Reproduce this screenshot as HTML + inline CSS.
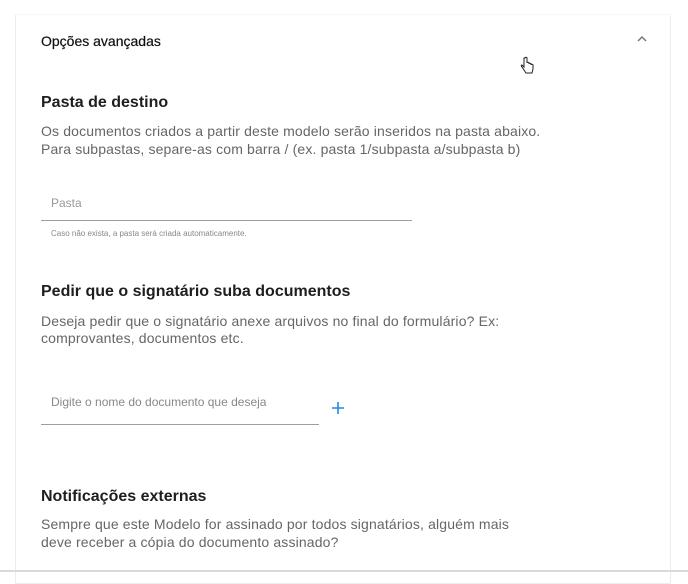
<!DOCTYPE html>
<html><head><meta charset="utf-8"><style>
*{margin:0;padding:0;box-sizing:border-box}
body{width:688px;height:572px;background:#fff;font-family:"Liberation Sans",sans-serif;position:relative;overflow:hidden}
.card{position:absolute;left:15px;top:14px;width:656px;height:570px;border:1px solid #ececec;border-top-color:#f6f6f6;border-radius:2px;background:#fff}
.t{position:absolute;white-space:nowrap}
.h0{left:41px;top:33px;font-size:14px;color:#111;font-weight:500;-webkit-text-stroke:0.2px #111}
.h{left:41px;font-size:16px;font-weight:bold;color:#1e1e1e}
.p{left:41px;font-size:14px;color:#666;line-height:18px;letter-spacing:0.15px}
.ph{font-size:12px;color:#999}
.line{position:absolute;height:1px;background:#9e9e9e}
</style></head><body>
<div class="card"></div>
<div class="t h0">Opções avançadas</div>
<svg style="position:absolute;left:636px;top:35px" width="12" height="8"><path d="M2 6 L6 2 L10 6" stroke="#777" stroke-width="1.5" fill="none"/></svg>
<svg style="position:absolute;left:519px;top:56px" width="16" height="20"><path d="M5 2v9l-2-2c-1 0-1 1 0 2l4 6h6l1-4v-4c0-1-2-1-2 0v-1c0-1-2-1-2 0v-1c0-1-2-1-2 0V2c0-1-2-1-2 0z" fill="#fff" stroke="#222" stroke-width="1"/></svg>
<div class="t h" style="top:94px">Pasta de destino</div>
<div class="t p" style="top:122px">Os documentos criados a partir deste modelo serão inseridos na pasta abaixo.<br>Para subpastas, separe-as com barra / (ex. pasta 1/subpasta a/subpasta b)</div>
<div class="t ph" style="left:51px;top:196px">Pasta</div>
<div class="line" style="left:41px;top:220px;width:371px"></div>
<div class="t" style="left:51px;top:229px;font-size:8px;color:#888">Caso não exista, a pasta será criada automaticamente.</div>
<div class="t h" style="top:283px">Pedir que o signatário suba documentos</div>
<div class="t p" style="top:313px;line-height:17px">Deseja pedir que o signatário anexe arquivos no final do formulário? Ex:<br>comprovantes, documentos etc.</div>
<div class="t ph" style="left:51px;top:395px;color:#888">Digite o nome do documento que deseja</div>
<div class="line" style="left:41px;top:424px;width:278px"></div>
<svg style="position:absolute;left:331px;top:401px" width="14" height="14"><path d="M7 1v12M1 7h12" stroke="#1e88e5" stroke-width="1.6"/></svg>
<div class="t h" style="top:488px">Notificações externas</div>
<div class="t p" style="top:515px">Sempre que este Modelo for assinado por todos signatários, alguém mais<br>deve receber a cópia do documento assinado?</div>
<div style="position:absolute;left:0;top:570px;width:688px;height:2px;background:#d6d9de"></div>
</body></html>
